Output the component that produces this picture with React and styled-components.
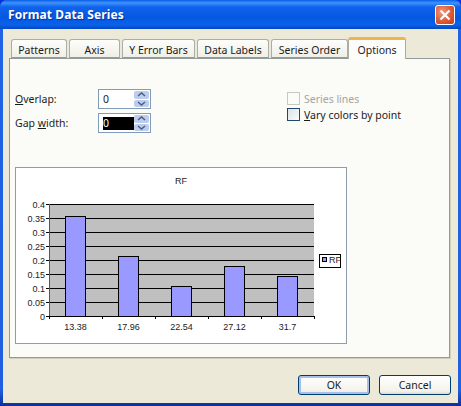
import React from "react";
import styled, { createGlobalStyle } from "styled-components";

const GlobalStyle = createGlobalStyle`
  html, body {
    margin: 0;
    padding: 0;
    background: #0831d9;
  }
  * {
    box-sizing: border-box;
  }
`;

const Window = styled.div`
  width: 461px;
  height: 406px;
  display: flex;
  flex-direction: column;
  overflow: hidden;
  border-radius: 7px 7px 0 0;
  background: linear-gradient(180deg, #1f63e6 0%, #1f5fe0 96%, #0a2f9c 100%);
  font-family: "Noto Sans", "Liberation Sans", sans-serif;
  font-size: 10.5px;
  color: #1c1c1c;
`;

const TitleBar = styled.div`
  height: 29px;
  flex: none;
  display: flex;
  align-items: center;
  justify-content: space-between;
  padding: 0 6px 0 8px;
  background: linear-gradient(180deg, #0b5fe8 0%, #3f93fb 10%, #0f63ec 24%, #0558e0 60%, #0a62ea 85%, #0548c4 100%);
`;

const Title = styled.span`
  color: #fff;
  font-size: 12px;
  font-weight: 700;
  letter-spacing: 0.1px;
  text-shadow: 1px 1px 1px #0a2f9c;
`;

const CloseButton = styled.div`
  width: 20px;
  height: 20px;
  display: flex;
  align-items: center;
  justify-content: center;
  border: 1px solid #fff;
  border-radius: 3px;
  background: radial-gradient(circle at 35% 35%, #ee9a7e 0%, #dd5b36 55%, #c23a18 100%);
`;

const Body = styled.div`
  flex: 1;
  margin: 0 3px 3px;
  padding: 7px 6px 0 6px;
  display: flex;
  flex-direction: column;
  background: #ece9d8;
`;

const TabStrip = styled.div`
  display: flex;
  align-items: flex-end;
  height: 22px;
  padding-left: 2px;
  flex: none;
  position: relative;
  z-index: 1;
`;

const Tab = styled.div`
  width: ${(p) => p.$width}px;
  margin-right: ${(p) => p.$gap}px;
  height: ${(p) => (p.$active ? 22 : 19)}px;
  margin-bottom: ${(p) => (p.$active ? -1 : 0)}px;
  padding-top: ${(p) => (p.$active ? 0 : 2)}px;
  display: flex;
  align-items: center;
  justify-content: center;
  white-space: nowrap;
  background: ${(p) => (p.$active ? "#fcfcfa" : "linear-gradient(180deg, #fdfdfb, #f0efe6)")};
  border: 1px solid #a9aea6;
  border-bottom: ${(p) => (p.$active ? "none" : "1px solid #919b9c")};
  border-top: ${(p) => (p.$active ? "3px solid #f0b44c" : "1px solid #a9aea6")};
  border-radius: 3px 3px 0 0;
`;

const Pane = styled.div`
  width: 441px;
  height: 300px;
  flex: none;
  padding: 30px 5px 0 5px;
  display: flex;
  flex-direction: column;
  background: #fbfbf8;
  border: 1px solid #919b9c;
  box-shadow: 1px 1px 0 #d0cdbd;
`;

const OptionsRow = styled.div`
  height: 44px;
  display: flex;
  justify-content: space-between;
`;

const Fields = styled.div`
  width: 136px;
  display: flex;
  flex-direction: column;
  gap: 4px;
`;

const FieldRow = styled.div`
  display: flex;
  align-items: center;
  justify-content: space-between;
  height: 20px;
`;

const Spinner = styled.div`
  width: 53px;
  height: 20px;
  padding: 1px;
  display: flex;
  align-items: center;
  justify-content: space-between;
  background: #fff;
  border: 1px solid #7f9db9;
`;

const SpinValue = styled.span`
  height: 13px;
  width: 31px;
  margin-left: 3px;
  line-height: 13px;
  background: ${(p) => (p.$selected ? "#000" : "transparent")};
  color: ${(p) => (p.$selected ? "#fff" : "#1c1c1c")};
`;

const SpinButtons = styled.div`
  width: 15px;
  height: 16px;
  display: flex;
  flex-direction: column;
  gap: 1px;
`;

const SpinButton = styled.div`
  flex: 1;
  display: flex;
  align-items: center;
  justify-content: center;
  border-radius: 2px;
  background: #bccdee;
`;

const Checks = styled.div`
  width: 157px;
  padding-top: 3px;
  display: flex;
  flex-direction: column;
  gap: 3px;
`;

const CheckRow = styled.div`
  display: flex;
  align-items: center;
  gap: 4px;
  height: 13px;
  color: ${(p) => (p.$disabled ? "#a5a59c" : "#1c1c1c")};
`;

const CheckBox = styled.span`
  width: 13px;
  height: 13px;
  flex: none;
  border: 1px solid ${(p) => (p.$disabled ? "#c9c8bf" : "#1f4a6e")};
  background: ${(p) => (p.$disabled ? "#fbfbf8" : "linear-gradient(135deg, #dce2e8, #fbfbf9)")};
`;

const ChartBox = styled.div`
  width: 332px;
  height: 177px;
  margin-top: 34px;
  background: #fff;
  border: 1px solid #8e9cae;
`;

const ChartSvg = styled.svg`
  display: block;
  font-family: "Liberation Sans", sans-serif;
  font-size: 9px;
  fill: #222;
`;

const Footer = styled.div`
  flex: 1;
  display: flex;
  justify-content: flex-end;
  gap: 9px;
  padding: 17px 0 0 0;
  margin-right: 1px;
`;

const Button = styled.div`
  width: 72px;
  height: 20px;
  display: flex;
  align-items: center;
  justify-content: center;
  border: 1px solid #003c74;
  border-radius: 3px;
  background: linear-gradient(180deg, #ffffff, #f3f2ea 85%, #dcd8c8);
  box-shadow: ${(p) => (p.$default ? "inset 0 0 0 2px #a6c0e8" : "none")};
`;

const tabs = [
  { label: "Patterns", width: 56, gap: 2 },
  { label: "Axis", width: 51, gap: 2 },
  { label: "Y Error Bars", width: 73, gap: 2 },
  { label: "Data Labels", width: 72, gap: 2 },
  { label: "Series Order", width: 77, gap: 0 },
  { label: "Options", width: 58, gap: 0, active: true },
];

// chart geometry is relative to the chart box
const PLOT = { left: 33, right: 298, top: 36, bottom: 148 };
const yLabels = ["0", "0.05", "0.1", "0.15", "0.2", "0.25", "0.3", "0.35", "0.4"];
const bars = [
  { label: "13.38", top: 48 },
  { label: "17.96", top: 88 },
  { label: "22.54", top: 118 },
  { label: "27.12", top: 98 },
  { label: "31.7", top: 108 },
];

const Arrow = ({ up }) => (
  <svg width="9" height="5" viewBox="0 0 9 5">
    <path
      d={up ? "M1 4 L4.5 1 L8 4" : "M1 1 L4.5 4 L8 1"}
      fill="none"
      stroke="#4d6185"
      strokeWidth="1.6"
    />
  </svg>
);

const SpinField = ({ value, selected }) => (
  <Spinner>
    <SpinValue $selected={selected}>{value}</SpinValue>
    <SpinButtons>
      <SpinButton>
        <Arrow up />
      </SpinButton>
      <SpinButton>
        <Arrow />
      </SpinButton>
    </SpinButtons>
  </Spinner>
);

const Chart = () => {
  const step = (PLOT.bottom - PLOT.top) / 8;
  const catWidth = (PLOT.right - PLOT.left) / 5;
  return (
    <ChartSvg width="330" height="175" viewBox="0 0 330 175">
      <text x="165" y="16" textAnchor="middle">RF</text>
      <rect
        x={PLOT.left}
        y={PLOT.top}
        width={PLOT.right - PLOT.left}
        height={PLOT.bottom - PLOT.top}
        fill="#c0c0c0"
      />
      {yLabels.map((label, i) => {
        const y = PLOT.bottom - i * step + 0.5;
        return (
          <g key={label}>
            <line x1={PLOT.left - 3} x2={PLOT.right} y1={y} y2={y} stroke="#000" />
            <text x={PLOT.left - 4} y={y + 3} textAnchor="end">{label}</text>
          </g>
        );
      })}
      <line x1={PLOT.left + 0.5} x2={PLOT.left + 0.5} y1={PLOT.top} y2={PLOT.bottom} stroke="#555" />
      {bars.map((bar, i) => {
        const x = PLOT.left + i * catWidth;
        return (
          <g key={bar.label}>
            <rect
              x={x + 16.5}
              y={bar.top + 0.5}
              width="20"
              height={PLOT.bottom - bar.top}
              fill="#9999ff"
              stroke="#000"
            />
            <text x={x + catWidth / 2} y="162" textAnchor="middle">{bar.label}</text>
          </g>
        );
      })}
      {[0, 1, 2, 3, 4, 5].map((i) => (
        <line
          key={i}
          x1={PLOT.left + i * catWidth + 0.5}
          x2={PLOT.left + i * catWidth + 0.5}
          y1={PLOT.bottom}
          y2={PLOT.bottom + 3}
          stroke="#000"
        />
      ))}
      <rect x="303.5" y="86.5" width="21" height="13" fill="#fff" stroke="#000" />
      <rect x="306.5" y="89.5" width="4" height="4" fill="#9999ff" stroke="#000" />
      <text x="313" y="95">RF</text>
    </ChartSvg>
  );
};

const App = () => {
  return (
    <>
      <GlobalStyle />
      <Window>
        <TitleBar>
          <Title>Format Data Series</Title>
          <CloseButton>
            <svg width="12" height="12" viewBox="0 0 12 12">
              <path d="M1.5 1.5 L10.5 10.5 M10.5 1.5 L1.5 10.5" stroke="#fff" strokeWidth="2.2" />
            </svg>
          </CloseButton>
        </TitleBar>
        <Body>
          <TabStrip>
            {tabs.map((tab) => (
              <Tab key={tab.label} $width={tab.width} $gap={tab.gap} $active={tab.active}>
                {tab.label}
              </Tab>
            ))}
          </TabStrip>
          <Pane>
            <OptionsRow>
              <Fields>
                <FieldRow>
                  <span><u>O</u>verlap:</span>
                  <SpinField value="0" />
                </FieldRow>
                <FieldRow>
                  <span>Gap <u>w</u>idth:</span>
                  <SpinField value="0" selected />
                </FieldRow>
              </Fields>
              <Checks>
                <CheckRow $disabled>
                  <CheckBox $disabled />
                  Series lines
                </CheckRow>
                <CheckRow>
                  <CheckBox />
                  <span><u>V</u>ary colors by point</span>
                </CheckRow>
              </Checks>
            </OptionsRow>
            <ChartBox>
              <Chart />
            </ChartBox>
          </Pane>
          <Footer>
            <Button $default>OK</Button>
            <Button>Cancel</Button>
          </Footer>
        </Body>
      </Window>
    </>
  );
};

export default App;
